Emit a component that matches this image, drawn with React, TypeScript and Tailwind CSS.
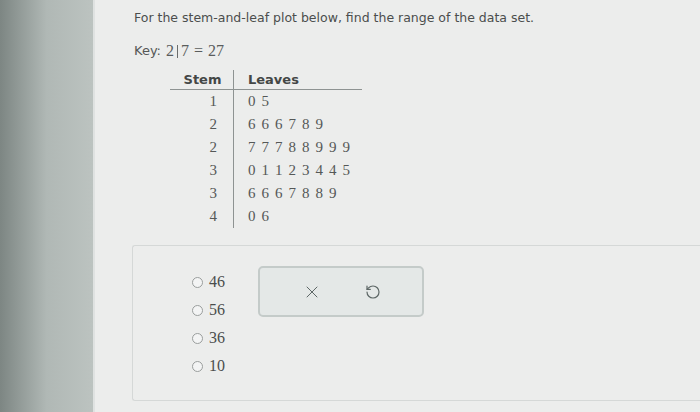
import { RotateCcw, X } from 'lucide-react';

const rows: { stem: string; leaves: string[] }[] = [
  { stem: '1', leaves: ['0', '5'] },
  { stem: '2', leaves: ['6', '6', '6', '7', '8', '9'] },
  { stem: '2', leaves: ['7', '7', '7', '8', '8', '9', '9', '9'] },
  { stem: '3', leaves: ['0', '1', '1', '2', '3', '4', '4', '5'] },
  { stem: '3', leaves: ['6', '6', '6', '7', '8', '8', '9'] },
  { stem: '4', leaves: ['0', '6'] },
];

const choices = ['46', '56', '36', '10'];

const sans = 'font-["DejaVu_Sans",Verdana,sans-serif]';
const serif = 'font-["Liberation_Serif","Times_New_Roman",serif]';

export default function App() {
  return (
    <div className="flex w-[700px] h-[412px] overflow-hidden bg-[#ecedec]">
      {/* left margin of the window */}
      <div className="w-[95px] shrink-0 bg-gradient-to-r from-[#7d8683] via-[#b0b8b5] to-[#bcc3c0] border-r-2 border-[#dfe2e1]" />

      <div className="flex-1 flex flex-col pl-[39px] pt-[9px]">
        <p className={`${sans} text-[12.5px] leading-[18px] text-[#4b4d4d]`}>
          For the stem-and-leaf plot below, find the range of the data set.
        </p>

        <p className={`mt-[14px] flex items-center ${sans} text-[13px] leading-[20px] text-[#555857]`}>
          Key:
          <span className={`ml-[5px] flex items-center gap-[3px] ${serif} text-[16px] text-[#5a5d5c]`}>
            <span>2</span>
            <span className="w-px h-[13px] bg-[#6a6d6c]" />
            <span>7</span>
            <span className="mx-[2px]">=</span>
            <span>27</span>
          </span>
        </p>

        {/* stem-and-leaf table */}
        <div className="ml-[36px] mt-[9px] w-[192px]">
          <div className="flex border-b border-[#8e9392]">
            <div className={`w-[64px] h-[19px] border-r border-[#8e9392] text-center pl-[2px] pt-[1px] ${sans} text-[13px] font-bold leading-[18px] text-[#444746]`}>
              Stem
            </div>
            <div className={`flex-1 pl-[14px] pt-[1px] ${sans} text-[13px] font-bold leading-[18px] text-[#444746]`}>
              Leaves
            </div>
          </div>
          {rows.map((r, i) => (
            <div key={i} className="flex">
              <div className={`w-[64px] h-[22.8px] border-r border-[#8e9392] text-right pr-[16px] ${serif} text-[15px] leading-[23px] text-[#555857]`}>
                {r.stem}
              </div>
              <div className={`flex gap-[6px] pl-[14px] ${serif} text-[15px] leading-[23px] text-[#555857]`}>
                {r.leaves.map((l, j) => (
                  <span key={j}>{l}</span>
                ))}
              </div>
            </div>
          ))}
        </div>

        {/* answer area */}
        <div className="mt-[17px] -ml-[2px] h-[156px] border-t border-l border-b border-[#d5d8d7] rounded-tl-[3px] rounded-bl-[3px] flex items-start pl-[59px] pt-[20px]">
          <div className="flex flex-col w-[66px] mt-[2px]">
            {choices.map((c) => (
              <label key={c} className="flex items-center h-[28px] gap-[6px]">
                <span className="w-[11px] h-[11px] rounded-full border border-[#9a9e9d] bg-[#f3f4f4]" />
                <span className={`${serif} text-[16px] leading-[28px] text-[#4a4d4c]`}>{c}</span>
              </label>
            ))}
          </div>
          <div className="w-[166px] h-[51px] rounded-[5px] border-2 border-[#c4cbc9] bg-[#e4e8e7] flex items-center justify-around px-[20px]">
            <X className="w-[20px] h-[20px] text-[#5d6766]" strokeWidth={1.2} />
            <RotateCcw className="w-[16px] h-[16px] text-[#5d6766]" strokeWidth={1.8} />
          </div>
        </div>
      </div>
    </div>
  );
}
